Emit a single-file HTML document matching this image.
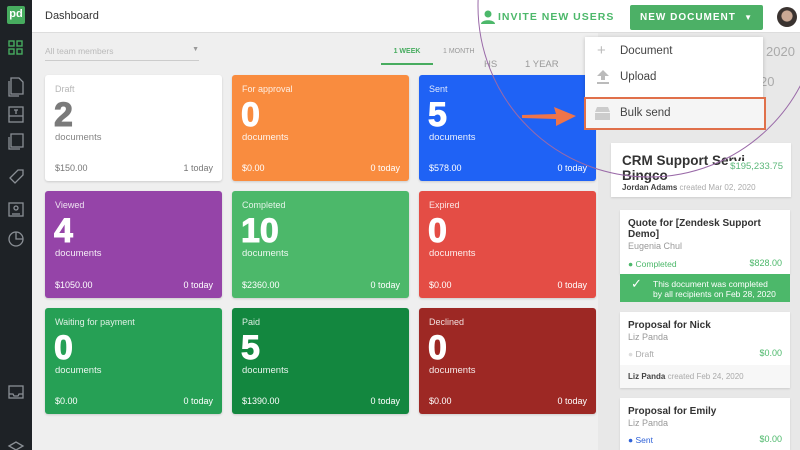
<!DOCTYPE html>
<html style="width:800px;height:450px;overflow:hidden"><head><style>
*{margin:0;padding:0;box-sizing:border-box}
body{width:800px;height:450px;overflow:hidden;background:#efefef;font-family:"Liberation Sans",sans-serif;position:relative}
.abs{position:absolute}
.side{left:0;top:0;width:32px;height:450px;background:#1e2226}
.hdr{left:32px;top:0;width:768px;height:33px;background:#fff;border-bottom:1px solid #ddd}
.card{position:absolute;width:177px;border-radius:3px;color:#fff;box-shadow:0 1px 2px rgba(0,0,0,.15)}
.card .t{position:absolute;left:10px;top:9px;font-size:9px;opacity:.85}
.card .n{position:absolute;left:9px;top:21px;font-size:34px;font-weight:bold;-webkit-text-stroke:1px currentColor}
.card .d{position:absolute;left:10px;top:57px;font-size:9.5px;opacity:.9}
.card .a{position:absolute;left:10px;bottom:8px;font-size:9px}
.card .b{position:absolute;right:9px;bottom:8px;font-size:9px}
.rp{left:598px;top:33px;width:202px;height:417px;background:#e8e8e8;overflow:hidden}
.rc{position:absolute;left:620px;width:170px;background:#fff;box-shadow:0 1px 2px rgba(0,0,0,.12)}
.rc h4{font-size:10px;color:#333;margin:8px 8px 0}
.rc .s{font-size:9px;color:#999;margin:1px 8px}
.ico{stroke:#8b9096;fill:none;stroke-width:1.3}
</style></head><body>
<div class="abs side">
 <div class="abs" style="left:7px;top:6px;width:18px;height:18px;background:#47ac5f;border-radius:2px;color:#fff;font-size:11px;font-weight:bold;text-align:center;line-height:17px">pd</div>
 <svg class="abs" style="left:0;top:36px" width="32" height="414">
  <g stroke="#47ac5f" fill="none" stroke-width="1.4"><rect x="9" y="5" width="5" height="5"/><rect x="17" y="5" width="5" height="5"/><rect x="9" y="13" width="5" height="5"/><rect x="17" y="13" width="5" height="5"/></g>
  <g class="ico"><path d="M11 42h8l4 4v12h-12z M9 45v15h10"/><rect x="9" y="71" width="14" height="15"/><path d="M9 80h14M14 74h4M16 74v4"/><path d="M11 98h12v13h-12z M9 101v12h11"/><path d="M10 142l8-8h5v5l-8 8z"/><rect x="9" y="167" width="14" height="13"/><circle cx="16" cy="172" r="2"/><path d="M12 178h8"/><circle cx="16" cy="203" r="7"/><path d="M16 196v7h7"/><rect x="9" y="350" width="14" height="12"/><path d="M9 358h4l1 2h4l1-2h4"/><path d="M9 410l7-4 7 4-7 4z"/></g>
 </svg>
</div>
<div class="abs hdr"><div class="abs" style="left:13px;top:10px;font-size:11px;color:#333">Dashboard</div></div>
<div class="abs" style="left:45px;top:46px;width:154px;height:15px;border-bottom:1px solid #ccc;font-size:8.5px;color:#bbb">All team members<span style="float:right;font-size:7px;color:#999">▼</span></div>
<div class="abs" style="left:381px;top:48px;width:52px;height:17px;border-bottom:2px solid #47ac5f;font-size:7px;color:#47ac5f;text-align:center;font-weight:bold">1 WEEK</div>
<div class="abs" style="left:443px;top:48px;font-size:7px;color:#999">1 MONTH</div>
<div class="abs" style="left:484px;top:59px;font-size:9.5px;color:#999">HS</div>
<div class="abs" style="left:525px;top:59px;font-size:9.5px;color:#999">1 YEAR</div>

<div class="card" style="left:45px;top:75px;height:106px;background:#fff;color:#777"><div class="t" style="color:#aaa">Draft</div><div class="n" style="color:#7a7a7a">2</div><div class="d">documents</div><div class="a">$150.00</div><div class="b">1 today</div></div>
<div class="card" style="left:232px;top:75px;height:106px;background:#f98c3f"><div class="t">For approval</div><div class="n">0</div><div class="d">documents</div><div class="a">$0.00</div><div class="b">0 today</div></div>
<div class="card" style="left:419px;top:75px;height:106px;background:#1f62f5"><div class="t">Sent</div><div class="n">5</div><div class="d">documents</div><div class="a">$578.00</div><div class="b">0 today</div></div>
<div class="card" style="left:45px;top:191px;height:107px;background:#9544a8"><div class="t">Viewed</div><div class="n">4</div><div class="d">documents</div><div class="a">$1050.00</div><div class="b">0 today</div></div>
<div class="card" style="left:232px;top:191px;height:107px;background:#4cb86a"><div class="t">Completed</div><div class="n">10</div><div class="d">documents</div><div class="a">$2360.00</div><div class="b">0 today</div></div>
<div class="card" style="left:419px;top:191px;height:107px;background:#e44d45"><div class="t">Expired</div><div class="n">0</div><div class="d">documents</div><div class="a">$0.00</div><div class="b">0 today</div></div>
<div class="card" style="left:45px;top:308px;height:106px;background:#26a055"><div class="t">Waiting for payment</div><div class="n">0</div><div class="d">documents</div><div class="a">$0.00</div><div class="b">0 today</div></div>
<div class="card" style="left:232px;top:308px;height:106px;background:#13873f"><div class="t">Paid</div><div class="n">5</div><div class="d">documents</div><div class="a">$1390.00</div><div class="b">0 today</div></div>
<div class="card" style="left:419px;top:308px;height:106px;background:#9d2824"><div class="t">Declined</div><div class="n">0</div><div class="d">documents</div><div class="a">$0.00</div><div class="b">0 today</div></div>

<div class="abs rp"></div>
<div class="abs" style="left:766px;top:44px;font-size:13px;color:#aaa">2020</div>
<div class="abs" style="left:760px;top:74px;font-size:13px;color:#aaa">20</div>
<div class="rc" style="left:611px;top:143px;width:180px;height:54px"><div class="abs" style="left:11px;top:10px;font-size:13.5px;font-weight:bold;color:#333;line-height:15px">CRM Support Servi<br>Bingco</div><div class="abs" style="right:8px;top:18px;font-size:9.5px;color:#5cb87a;background:#fff;padding-left:2px">$195,233.75</div><div class="abs" style="left:11px;top:40px;font-size:8px;color:#aaa"><b style="color:#444">Jordan Adams</b> created Mar 02, 2020</div></div>
<div class="rc" style="top:210px;height:64px"><h4>Quote for [Zendesk Support Demo]</h4><div class="s">Eugenia Chul</div><div class="abs" style="left:8px;top:49px;font-size:8.5px;color:#4cb86a">● Completed</div><div class="abs" style="right:8px;top:48px;font-size:9px;color:#4cb86a">$828.00</div></div>
<div class="abs" style="left:620px;top:274px;width:170px;height:28px;background:#4cb86a;color:#fff;font-size:8.5px;line-height:10px;padding:5px 0 0 33px">This document was completed<br>by all recipients on Feb 28, 2020<span class="abs" style="left:11px;top:5px;font-size:13px">✓</span></div>
<div class="rc" style="top:312px;height:76px"><h4>Proposal for Nick</h4><div class="s">Liz Panda</div><div class="abs" style="left:8px;top:37px;font-size:8.5px;color:#aaa"><span style="color:#ddd">●</span> Draft</div><div class="abs" style="right:8px;top:36px;font-size:9px;color:#4cb86a">$0.00</div><div class="abs" style="left:0;top:53px;width:170px;height:23px;background:#f7f7f7;font-size:8px;color:#aaa;padding:7px 8px"><b style="color:#444">Liz Panda</b> created Feb 24, 2020</div></div>
<div class="rc" style="top:398px;height:52px"><h4>Proposal for Emily</h4><div class="s">Liz Panda</div><div class="abs" style="left:8px;top:37px;font-size:8.5px;color:#2f62d8">● Sent</div><div class="abs" style="right:8px;top:36px;font-size:9px;color:#4cb86a">$0.00</div></div>

<div class="abs" style="left:478px;top:3px;width:139px;height:28px;background:#fff;color:#4cb86a;font-size:10.5px;font-weight:bold;letter-spacing:1px;line-height:28px;padding-left:20px">INVITE NEW USERS<svg class="abs" style="left:2px;top:7px" width="16" height="14"><circle cx="8" cy="4" r="3.5" fill="#4cb86a"/><path d="M1 14c0-5 14-5 14 0z" fill="#4cb86a"/></svg></div>
<div class="abs" style="left:630px;top:5px;width:133px;height:25px;background:#4cb066;border-radius:2px;color:#fff;font-size:10px;font-weight:bold;letter-spacing:1px;line-height:25px;padding-left:10px">NEW DOCUMENT<span style="position:absolute;right:10px;font-size:8px">▼</span></div>
<div class="abs" style="left:777px;top:7px;width:20px;height:20px;border-radius:50%;background:radial-gradient(circle at 50% 45%,#c9a894 0 35%,#3a3330 40%)"></div>
<div class="abs" style="left:585px;top:37px;width:178px;height:62px;background:#fff;box-shadow:0 1px 4px rgba(0,0,0,.2)"></div>
<div class="abs" style="left:620px;top:45px;font-size:11.5px;color:#444">Document</div>
<div class="abs" style="left:597px;top:42px;font-size:15px;color:#bbb">+</div>
<div class="abs" style="left:620px;top:71px;font-size:11.5px;color:#444">Upload</div>
<svg class="abs" style="left:596px;top:69px" width="14" height="16"><path d="M7 1l6 6H9v4H5V7H1z M1 13h12v2H1z" fill="#bbb"/></svg>
<div class="abs" style="left:584px;top:97px;width:182px;height:33px;background:#f5f5f5;border:2.5px solid #e0704a"></div>
<svg class="abs" style="left:594px;top:105px" width="17" height="16"><path d="M3 2h11l2 5H1z" fill="#ccc"/><rect x="1" y="8" width="15" height="7" fill="#ccc"/></svg>
<div class="abs" style="left:620px;top:107px;font-size:11.5px;color:#444">Bulk send</div>
<svg class="abs" style="left:518px;top:104px" width="62" height="26"><path d="M4 11L38 10L36 3L58 12L38 22L38 15L4 14z" fill="#ef7449"/></svg>
<svg class="abs" style="left:0;top:0" width="800" height="450"><circle cx="649" cy="6" r="171" fill="none" stroke="#9a6aa8" stroke-width="1"/></svg>
</body></html>
